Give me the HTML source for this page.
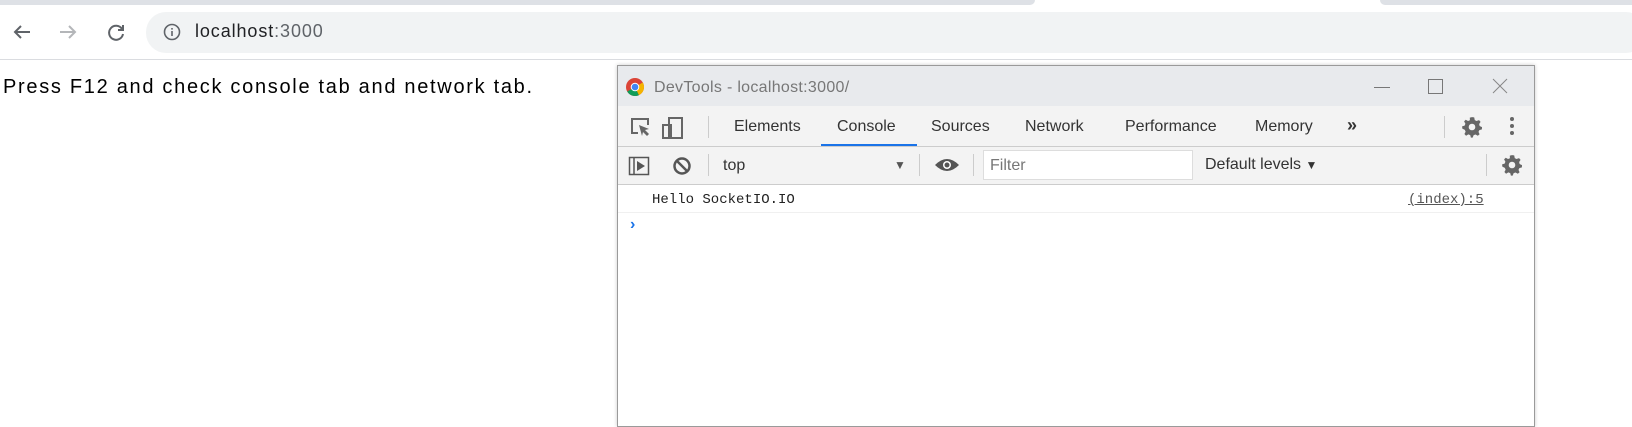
<!DOCTYPE html><html><head><style>
body{margin:0;width:1632px;height:415px;overflow:hidden;background:#fff;font-family:"Liberation Sans",sans-serif;position:relative}
.a{position:absolute}
.t{font-size:16px;color:#333;white-space:nowrap}
</style></head><body>
<svg width="0" height="0" style="position:absolute"><defs><g id="gear"><path d="M10 1l2 .3.5 2.4 1.6.9 2.3-.9 1.4 1.6-1.3 2 .4 1.8 2.2 1-.1 2.1-2.3.6-.8 1.6 1 2.2-1.6 1.4-2.1-1.2-1.7.6-.9 2.3H9l-.6-2.3-1.7-.7-2.1 1.2-1.5-1.5 1.1-2.1-.7-1.7L1.2 11.5 1 9.4l2.3-.7.7-1.7-1.2-2.1 1.5-1.5 2.1 1.2 1.7-.7L8 1.5z" fill="#666"/><circle cx="10" cy="10" r="3" fill="#f3f3f3"/></g></defs></svg>
<div class="a" style="left:0;top:0;width:1035px;height:5px;background:#dee1e6;border-radius:0 0 8px 0"></div>
<div class="a" style="left:1380px;top:0;width:252px;height:5px;background:#dee1e6;border-radius:0 0 0 8px"></div>
<div class="a" style="left:146px;top:12px;width:1500px;height:41px;background:#f1f3f4;border-radius:20px"></div>
<div class="a" style="left:0;top:59px;width:1632px;height:1px;background:#dadce0"></div>
<svg class="a" style="left:10px;top:20px" width="120" height="24" viewBox="0 0 120 24" fill="none" stroke-width="2">
<path d="M20 12H5M11 6l-6 6 6 6" stroke="#5f6368"/>
<path d="M50 12h15M59 6l6 6-6 6" stroke="#b4b6b9"/>
<path d="M112 9a7 7 0 1 0 1 5" stroke="#5f6368"/><path d="M113 5v5h-5" stroke="#5f6368"/>
</svg>
<svg class="a" style="left:163px;top:23px" width="18" height="18" viewBox="0 0 18 18"><circle cx="9" cy="9" r="7.5" fill="none" stroke="#5f6368" stroke-width="1.6"/><rect x="8.2" y="8" width="1.6" height="5" fill="#5f6368"/><rect x="8.2" y="5" width="1.6" height="1.6" fill="#5f6368"/></svg>
<div class="a" style="left:195px;top:21px;font-size:18px;color:#202124;letter-spacing:0.9px">localhost<span style="color:#5f6368">:3000</span></div>
<div class="a" style="left:3px;top:76px;font-size:20px;color:#000;letter-spacing:1.7px;white-space:nowrap">Press F12 and check console tab and network tab.</div>

<div class="a" style="left:617px;top:65px;width:916px;height:360px;border:1px solid #9a9a9a;background:#fff;box-shadow:0 0 4px rgba(0,0,0,.2)">
 <div class="a" style="left:0;top:0;width:916px;height:40px;background:#e8eaed"></div>
 <svg class="a" style="left:7px;top:11px" width="20" height="20" viewBox="0 0 20 20"><circle cx="10" cy="10" r="9" fill="#db4437"/><path d="M10 10 L2.2 14.5 A9 9 0 0 0 14 18.1Z" fill="#0f9d58"/><path d="M10 10 L14 18.1 A9 9 0 0 0 17.8 5.5Z" fill="#f4b400"/><circle cx="10" cy="10" r="4.3" fill="#fff"/><circle cx="10" cy="10" r="3.3" fill="#4285f4"/></svg>
 <div class="a t" style="left:36px;top:13px;color:#777;letter-spacing:0.3px">DevTools - localhost:3000/</div>
 <div class="a" style="left:756px;top:21px;width:16px;height:1px;background:#777"></div>
 <div class="a" style="left:810px;top:13px;width:13px;height:13px;border:1px solid #777"></div>
 <svg class="a" style="left:874px;top:12px" width="16" height="16"><path d="M1 1l14 14M15 1L1 15" stroke="#888"/></svg>
 <div class="a" style="left:0;top:40px;width:916px;height:40px;background:#f3f3f3;border-bottom:1px solid #ccc"></div>
 <svg class="a" style="left:12px;top:51px" width="60" height="22" fill="none" stroke="#666" stroke-width="2"><path d="M8 16H2V2h16v6"/><path d="M9 8l10 4-4 1 4 4-2 2-4-4-1 4z" fill="#666" stroke="none"/><rect x="39" y="1" width="13" height="20"/><rect x="33" y="8" width="8" height="13"/></svg>
 <div class="a" style="left:90px;top:50px;width:1px;height:22px;background:#ccc"></div>
 <div class="a t" style="left:116px;top:52px">Elements</div>
 <div class="a t" style="left:219px;top:52px;color:#333">Console</div>
 <div class="a" style="left:203px;top:78px;width:96px;height:2px;background:#1a73e8"></div>
 <div class="a t" style="left:313px;top:52px">Sources</div>
 <div class="a t" style="left:407px;top:52px">Network</div>
 <div class="a t" style="left:507px;top:52px">Performance</div>
 <div class="a t" style="left:637px;top:52px">Memory</div>
 <div class="a t" style="left:729px;top:49px;font-weight:bold;font-size:18px">»</div>
 <div class="a" style="left:826px;top:50px;width:1px;height:22px;background:#ccc"></div>
 <svg class="a" style="left:843px;top:50px" width="22" height="22" viewBox="0 0 20 20"><use href="#gear"/></svg>
 <div class="a" style="left:892px;top:51px;width:4px;height:4px;border-radius:2px;background:#666;box-shadow:0 7px #666,0 14px #666"></div>
 <div class="a" style="left:0;top:81px;width:916px;height:37px;background:#f3f3f3;border-bottom:1px solid #ccc"></div>
 <svg class="a" style="left:10px;top:89px" width="70" height="22"><rect x="1.5" y="2.5" width="19" height="17" fill="none" stroke="#555" stroke-width="1.5"/><line x1="6" y1="3" x2="6" y2="19" stroke="#555" stroke-width="1.5"/><path d="M9 6l8 5-8 5z" fill="#555"/><circle cx="54" cy="11" r="7.5" fill="none" stroke="#555" stroke-width="2.5"/><path d="M49 6l10 10" stroke="#555" stroke-width="2.5"/></svg>
 <div class="a" style="left:90px;top:88px;width:1px;height:22px;background:#ccc"></div>
 <div class="a t" style="left:105px;top:91px">top</div>
 <div class="a" style="left:276px;top:92px;font-size:12px;color:#555">▼</div>
 <div class="a" style="left:301px;top:88px;width:1px;height:22px;background:#ccc"></div>
 <svg class="a" style="left:316px;top:91px" width="26" height="16"><path d="M1 8Q13 -4 25 8Q13 20 1 8z" fill="#555"/><circle cx="13" cy="8" r="4" fill="#fff"/><circle cx="13" cy="8" r="2.5" fill="#555"/></svg>
 <div class="a" style="left:355px;top:88px;width:1px;height:22px;background:#ccc"></div>
 <div class="a" style="left:365px;top:84px;width:208px;height:28px;background:#fff;border:1px solid #ddd"></div>
 <div class="a t" style="left:372px;top:91px;color:#777">Filter</div>
 <div class="a t" style="left:587px;top:90px">Default levels <span style="font-size:12px">▼</span></div>
 <div class="a" style="left:868px;top:88px;width:1px;height:22px;background:#ccc"></div>
 <svg class="a" style="left:883px;top:88px" width="22" height="22" viewBox="0 0 20 20"><use href="#gear"/></svg>
 <div class="a" style="left:0;top:146px;width:916px;height:1px;background:#f0f0f0"></div>
 <div class="a" style="left:34px;top:126px;font-family:'Liberation Mono',monospace;font-size:14px;color:#222">Hello SocketIO.IO</div>
 <div class="a" style="left:790px;top:126px;font-family:'Liberation Mono',monospace;font-size:14px;color:#555;text-decoration:underline">(index):5</div>
 <div class="a" style="left:12px;top:150px;font-size:16px;color:#1a73e8;font-weight:bold">›</div>
</div>
</body></html>
